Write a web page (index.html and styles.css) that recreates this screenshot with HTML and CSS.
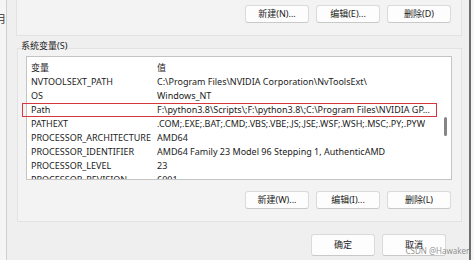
FILE: index.html
```html
<!DOCTYPE html>
<html lang="zh-CN">
<head>
  <meta charset="UTF-8">
  <title>环境变量</title>
  <link rel="stylesheet" href="styles.css">
</head>
<body>
  <div class="screen">
    <div class="side"><span class="side-text">月</span></div>

    <div class="dialog">
      <!-- 用户变量 (上半部分被裁掉) -->
      <div class="group group-user">
        <div class="btn-row">
          <button class="btn">新建(N)...</button>
          <button class="btn">编辑(E)...</button>
          <button class="btn">删除(D)</button>
        </div>
      </div>

      <fieldset class="group group-sys">
        <legend>系统变量(S)</legend>
        <div class="list">
          <div class="list-body">
            <table class="var-tab">
              <thead>
                <tr><th>变量</th><th>值</th></tr>
              </thead>
              <tbody>
                <tr><td>NVTOOLSEXT_PATH</td><td>C:\Program Files\NVIDIA Corporation\NvToolsExt\</td></tr>
                <tr><td>OS</td><td>Windows_NT</td></tr>
                <tr><td>Path</td><td>F:\python3.8\Scripts\;F:\python3.8\;C:\Program Files\NVIDIA GP...</td></tr>
                <tr><td>PATHEXT</td><td>.COM;.EXE;.BAT;.CMD;.VBS;.VBE;.JS;.JSE;.WSF;.WSH;.MSC;.PY;.PYW</td></tr>
                <tr><td>PROCESSOR_ARCHITECTURE</td><td>AMD64</td></tr>
                <tr><td>PROCESSOR_IDENTIFIER</td><td>AMD64 Family 23 Model 96 Stepping 1, AuthenticAMD</td></tr>
                <tr><td>PROCESSOR_LEVEL</td><td>23</td></tr>
                <tr><td>PROCESSOR_REVISION</td><td>6001</td></tr>
              </tbody>
            </table>
          </div>
          <div class="mark"></div>
          <div class="thumb"></div>
        </div>
        <div class="btn-row btn-row-sys">
          <button class="btn">新建(W)...</button>
          <button class="btn">编辑(I)...</button>
          <button class="btn">删除(L)</button>
        </div>
      </fieldset>

      <div class="dlg-row">
        <button class="btn btn-dlg">确定</button>
        <button class="btn btn-dlg">取消</button>
      </div>
    </div>

    <div class="outside"></div>
    <div class="watermark">CSDN @Hawaken</div>
  </div>
</body>
</html>
```

FILE: styles.css
```css
html, body {
  margin: 0;
  padding: 0;
}

body {
  font-family: "Noto Sans", "Noto Sans CJK SC", sans-serif;
  color: #1b1b1b;
  background: #efefef;
}

.screen {
  position: relative;
  display: flex;
  width: 474px;
  height: 260px;
  overflow: hidden;
}

/* left strip from the window behind */
.side {
  width: 7px;
  border-right: 1px solid #cfcfcf;
  background: #f5f5f5;
  overflow: hidden;
  padding-top: 13px;
  box-sizing: border-box;
}

.side-text {
  display: block;
  margin-left: -4px;
  font-family: "Noto Sans CJK SC", sans-serif;
  font-size: 10px;
  line-height: 12px;
  color: #333;
}

.dialog {
  width: 464px;
  background: #efefef;
  border-right: 2px solid #6e6e6e;
  box-sizing: border-box;
  display: flex;
  flex-direction: column;
}

.outside {
  flex: 1;
  background: #f6f6f6;
}

.group {
  background: #f3f3f3;
  border: 1px solid #e2e2e2;
  box-sizing: border-box;
}

.group-user {
  margin: 0 7px 0 9px;
  height: 36px;
  border-top: none;
  padding: 5px 10px 0 0;
}

.btn-row {
  display: flex;
  justify-content: flex-end;
  gap: 7px;
}

.btn {
  width: 64px;
  height: 18px;
  padding: 0;
  background: #fdfdfd;
  border: 1px solid #dadada;
  border-bottom-color: #c9c9c9;
  border-radius: 3px;
  font-family: "Noto Sans", "Noto Sans CJK SC", sans-serif;
  font-size: 9px;
  color: #1b1b1b;
  line-height: 16px;
}

.group-sys {
  margin: 4px 7px 0 10px;
  padding: 0 9px 12px 8px;
  min-width: 0;
}

.group-sys legend {
  margin-left: -5px;
  padding: 0 0 4px 0;
  font-size: 9px;
  line-height: 12px;
  color: #1b1b1b;
}

.list {
  position: relative;
  height: 124px;
  background: #fff;
  border: 1px solid #c4c4c4;
  box-sizing: border-box;
}

.list-body {
  height: 100%;
  overflow: hidden;
  padding: 4px 0 0 4px;
  box-sizing: border-box;
}

.var-tab {
  table-layout: fixed;
  width: 410px;
  border-collapse: collapse;
  font-size: 9px;
}

.var-tab th,
.var-tab td {
  padding: 0;
  height: 14px;
  line-height: 14px;
  text-align: left;
  font-weight: normal;
  white-space: nowrap;
  overflow: hidden;
}

.var-tab th:first-child,
.var-tab td:first-child {
  width: 126px;
}

/* red annotation over the Path row */
.mark {
  position: absolute;
  left: -5px;
  top: 46px;
  width: 415px;
  height: 14px;
  border: 1px solid #d4373d;
  box-sizing: border-box;
}

.thumb {
  position: absolute;
  left: 417px;
  top: 60px;
  width: 3px;
  height: 19px;
  border-radius: 2px;
  background: #868686;
}

.btn-row-sys {
  margin-top: 11px;
  padding-right: 1px;
}

.dlg-row {
  display: flex;
  justify-content: flex-end;
  gap: 7px;
  margin-top: 12px;
  padding-right: 23px;
}

.btn-dlg {
  height: 22px;
  line-height: 20px;
}

.watermark {
  position: absolute;
  right: 3px;
  bottom: 4px;
  font-size: 8px;
  line-height: 10px;
  color: rgba(110, 110, 110, 0.75);
}
```
